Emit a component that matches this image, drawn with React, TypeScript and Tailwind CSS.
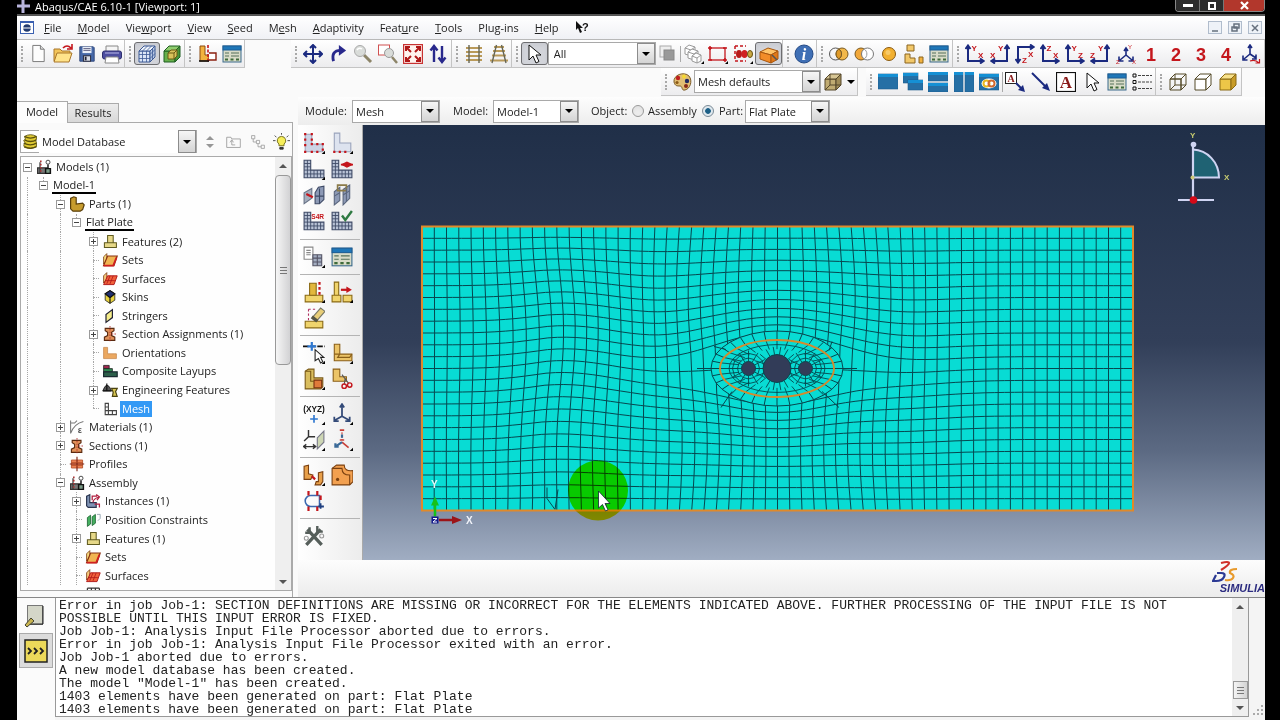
import React from "react";

type P = { children?: React.ReactNode; s?: number };
const Svg = ({ children, s = 20 }: P) => (
  <svg width={s} height={s} viewBox="0 0 20 20" fill="none" stroke="#333" strokeWidth="1" aria-hidden="true">
    {children}
  </svg>
);

const NAVY = "#1b2a80";
const RED = "#c4161c";

/* ---------- shared icon parts ---------- */
const TableIcon = (
  <>
    <rect x="1" y="2" width="18" height="16" fill="#d9dcc8" stroke="#3b6a8c" />
    <rect x="1" y="2" width="18" height="4" fill="#1f77b8" stroke="#1f5f96" />
    <path d="M3 9h4M9 9h8M3 12h4M9 12h8" stroke="#54705a" />
    <path d="M3 15.500h3M8.500 15.500h3M14 15.500h3" stroke="#3f6b3a" strokeWidth="2" />
  </>
);
const Cube = ({ f, t, r, c = "#333", grid }: { f: string; t: string; r: string; c?: string; grid?: boolean }) => (
  <>
    <path d="M2 7h11v11H2z" fill={f} stroke={c} />
    <path d="M2 7l5-5h11l-5 5z" fill={t} stroke={c} />
    <path d="M13 7l5-5v11l-5 5z" fill={r} stroke={c} />
    {grid && <path d="M5.500 7v11M9.500 7v11M2 10.500h11l5-5M2 14.500h11l5-5M5.500 7l5-5M9.500 7l5-5M15.500 4.500v11" stroke={c} strokeWidth=".8" />}
  </>
);
const LMesh = (
  <>
    <path d="M1 2h6v9h12v7H1z" fill="#b9c3d6" stroke="#3e4a66" />
    <path d="M4 2v16M1 5h6M1 8h6M1 11h6M1 14.500h18M7 11v7M10 11v7M13 11v7M16 11v7" stroke="#3e4a66" strokeWidth=".8" />
  </>
);
const Corner = <path d="M20 17v3h-3z" fill="#000" stroke="none" />;
const Mag = (
  <>
    <path d="M11 11l7 7" stroke="#8c8468" strokeWidth="3" />
    <circle cx="7" cy="7" r="5.500" fill="#d9dcd9" stroke="#aaa" />
    <path d="M4 6q2-3 5-1" stroke="#fff" strokeWidth="1.500" />
  </>
);
const Axes = ({ a, b, m }: { a: string; b: string; m?: boolean }) => (
  <>
    {m ? (
      <path d="M17 2v15H2M14.500 5L17 1.500 19.500 5M5 14.500L1.500 17 5 19.500" stroke={NAVY} strokeWidth="2" />
    ) : (
      <path d="M3 2v15h15M.5 5L3 1.500 5.500 5M15 14.500l3.500 2.500-3.500 2.500" stroke={NAVY} strokeWidth="2" />
    )}
    <g fill={RED} stroke="none" fontFamily="Liberation Sans, sans-serif" fontWeight="bold" fontSize="8">
      <text x={m ? 8 : 6.5} y="7">{a}</text>
      <text x={m ? 0 : 13} y="14">{b}</text>
    </g>
  </>
);
const Num = ({ n }: { n: string }) => (
  <text x="10" y="16.500" textAnchor="middle" fill={RED} stroke="none" fontFamily="Liberation Sans, sans-serif" fontWeight="bold" fontSize="18">{n}</text>
);
const Arrow = <path d="M5 1v15l4-4 3 7 3-1.500-3-6.500h5z" fill="#fff" stroke="#111" />;
const Win = ({ x, y, w, h }: { x: number; y: number; w: number; h: number }) => (
  <>
    <rect x={x} y={y} width={w} height={h} fill="#256fa5" stroke="#1c5a8c" strokeWidth=".6" />
    <rect x={x} y={y} width={w} height={Math.min(3, h)} fill="#1590d4" stroke="none" />
  </>
);
const BasePart = <path d="M2 13h16v6H2z" fill="#f0d46c" stroke="#8a6a14" />;
const PartL = (c: string) => <path d="M3 3l5-2v9h11l-1 6-3 2H3z" fill={c} stroke="#7a5010" />;

const icons: Record<string, React.ReactNode> = {
  new: <><path d="M4 1.500h8l4 4v13H4z" fill="#fdfdfd" stroke="#777" /><path d="M12 1.500v4h4" stroke="#777" fill="#ddd" /></>,
  open: <><path d="M1 17V5h6l2 2h8v3" fill="#f3c55a" stroke="#a9762a" /><path d="M1 18l3-9h15l-3 9z" fill="#ffe38a" stroke="#a9762a" /><path d="M10 4q4-4 8 0M19 0v5h-5" stroke={RED} strokeWidth="1.600" /></>,
  save: <><path d="M2 2h15l1 1v15H2z" fill="#4668a8" stroke="#2b4378" /><rect x="5" y="2" width="10" height="7" fill="#e8eef8" stroke="none" /><path d="M6 4h8M6 6h8" stroke="#557" /><rect x="6" y="12" width="8" height="6" fill="#d7dce6" stroke="#223" /><rect x="7.500" y="13" width="2" height="4" fill="#223" stroke="none" /></>,
  print: <><path d="M4 2h12v6H4z" fill="#f5f5f5" stroke="#888" /><rect x="0.500" y="7" width="19" height="8" rx="2" fill="#4c4da0" stroke="#2e2f70" /><path d="M3 9h14" stroke="#b8b8e8" /><path d="M4 13h12l1 6H3z" fill="#fff" stroke="#888" /></>,
  meshcube: <Cube f="#dbe6f7" t="#eef3fb" r="#b8c8e4" c="#3d5a96" grid />,
  greencube: <><Cube f="#67b04b" t="#8fcc6e" r="#4a9338" c="#1f5f22" /><path d="M6 9l3-3h6v6l-3 3H6z" fill="#d9c25b" stroke="#6b5a15" /><path d="M6 9h6v6M12 9l3-3" stroke="#6b5a15" /></>,
  lcut: <><path d="M3 2h5v9h4v6H3z" fill="#f2b23e" stroke="#8a4a10" /><path d="M12 9h7v7h-7" stroke="#8a2010" strokeWidth="1.400" fill="#fff" /><path d="M11 1v18" stroke={RED} strokeDasharray="3 1.500" strokeWidth="1.600" /><path d="M2 17h10" stroke="#111" strokeWidth="1.600" /></>,
  table: TableIcon,
  pan: <path d="M10 1v18M1 10h18M7 4l3-3 3 3M7 16l3 3 3-3M4 7l-3 3 3 3M16 7l3 3-3 3" stroke={NAVY} strokeWidth="2" />,
  rotate: <><path d="M5 18Q2 6 13 6" stroke="#28288c" strokeWidth="3.200" /><path d="M11 0l8 6-8 6z" fill="#28288c" stroke="none" /></>,
  zoom: Mag,
  zoombox: <><rect x="0.500" y="1" width="11" height="10" stroke="#d05050" fill="#fff" /><circle cx="11" cy="9" r="4.500" fill="#d9dcd9" stroke="#999" /><path d="M14 13l5 6" stroke="#8c8468" strokeWidth="2.500" /></>,
  fit: <><rect x="0.500" y="0.500" width="19" height="19" stroke="#c83232" fill="#fff3ee" strokeWidth="1.400" /><path d="M8 8L3.500 3.500M12 8l4.500-4.500M8 12l-4.500 4.500M12 12l4.500 4.500" stroke="#b01818" strokeWidth="2" /><path d="M3 7V3h4M13 3h4v4M3 13v4h4M17 13v4h-4" stroke="#b01818" strokeWidth="2" /></>,
  updown: <path d="M6 18V3M2.500 6.500L6 2l3.500 4.500M14 2v15M10.500 13.500L14 18l3.500-4.500" stroke="#28288c" strokeWidth="2.400" />,
  rails: <><path d="M2 4h16M2 8h16M2 12h16M2 16h16" stroke="#b99a5a" strokeWidth="2.200" /><path d="M5 1v18M15 1v18" stroke="#665" strokeWidth="1.400" /></>,
  rails2: <><path d="M5 3h10M4 7h12M3 11.500h14M1 16.500h18" stroke="#b99a5a" strokeWidth="2.200" /><path d="M7.500 1L3 19M12.500 1L17 19" stroke="#665" strokeWidth="1.400" /></>,
  select: Arrow,
  copy: <><rect x="2" y="2" width="11" height="11" stroke="#aaa" fill="#eee" /><rect x="6" y="6" width="10" height="10" fill="#999" stroke="#888" /></>,
  boxes: <><path d="M1 4l4-3 6 2v6l-4 3-6-2zM1 4l6 2v6M7 6l4-3" fill="#fff" stroke="#999" /><path d="M4 8l4-3 6 2v6l-4 3-6-2zM4 8l6 2v6M10 10l4-3" fill="#fff" stroke="#999" /><path d="M8 12l4-3 5 2v6l-4 2-5-2zM8 12l5 2v5M13 14l4-3" fill="#fff" stroke="#999" />{Corner}</>,
  selrect: <><rect x="2" y="4" width="15" height="12" stroke={RED} strokeWidth="1.300" /><path d="M0 4h4M2 2v4M15 16h4M17 14v4M0 16h4M15 4h4" stroke={RED} strokeWidth="1.500" />{Corner}</>,
  selcirc: <><path d="M2 2h11M2 2v15h11" stroke={RED} strokeDasharray="3 2" strokeWidth="1.500" /><ellipse cx="6" cy="10" rx="3" ry="4" fill="#b81a1a" stroke="none" /><ellipse cx="11.500" cy="10" rx="3" ry="4" fill="#d02020" stroke="none" /><ellipse cx="17" cy="10" rx="2.500" ry="3.500" fill="#c9a842" stroke="#665010" />{Corner}</>,
  orangebox: <><path d="M1 8l8-4 10 3-7 4z" fill="#ffc46a" stroke="#a8560e" /><path d="M1 8l11 3v8L1 15z" fill="#f28c28" stroke="#a8560e" /><path d="M12 11l7-4v8l-7 4z" fill="#e07818" stroke="#a8560e" /><path d="M13 11l5 5" stroke="#555" strokeWidth="1.600" /></>,
  info: <><circle cx="10" cy="10" r="9" fill="#3f6fb5" stroke="#244a86" /><text x="10" y="15.500" textAnchor="middle" fontFamily="Liberation Serif, serif" fontStyle="italic" fontWeight="bold" fontSize="16" fill="#fff" stroke="none">i</text></>,
  venn1: <><circle cx="13" cy="10" r="6" fill="#f2b84a" stroke="#7a5a20" /><circle cx="6.500" cy="10" r="6" stroke="#555" /><path d="M9.800 5a6 6 0 010 10a6 6 0 010-10" fill="#e09a28" stroke="#7a5a20" /></>,
  venn2: <><circle cx="7" cy="10" r="6" fill="#f2a83a" stroke="#7a5a20" /><circle cx="13.500" cy="10" r="6" fill="#fff" stroke="#777" /><path d="M10.200 5a6 6 0 010 10" stroke="#999" /></>,
  disc: <><circle cx="10" cy="10" r="6.500" fill="#f2b030" stroke="#8a5a10" /><circle cx="9" cy="8.500" r="2.500" fill="#f8ca68" stroke="none" /></>,
  blocks: <><path d="M3 1h7v6H3zM1 10h5v4h5v5H1z" fill="#f2c86a" stroke="#8a6420" /><path d="M15 13h4v6h-4z" fill="#f2b23e" stroke="#8a6420" /></>,
  xy: <Axes a="Y" b="X" />, xym: <Axes a="Y" b="X" m />, zx: <Axes a="Z" b="X" />, yz: <Axes a="Y" b="Z" />, zym: <Axes a="Y" b="Z" m />,
  xz: <><path d="M3 18V3h15M.5 15L3 18.500 5.500 15M15 .5L18.500 3 15 5.500" stroke={NAVY} strokeWidth="2" /><g fill={RED} stroke="none" fontFamily="Liberation Sans, sans-serif" fontWeight="bold" fontSize="8"><text x="13" y="13">X</text><text x="7" y="19">Z</text></g></>,
  iso: <><path d="M10 11V5M10 11l-6 5M10 11l6 5M8 7l2-3 2 3M3 12.500V17h4.500M17 12.500V17h-4.500" stroke={NAVY} strokeWidth="1.600" /><g fill={RED} stroke="none" fontFamily="Liberation Sans, sans-serif" fontSize="6"><text x="12" y="5">Y</text><text x="0" y="20">Z</text><text x="16" y="20">X</text></g></>,
  n1: <Num n="1" />, n2: <Num n="2" />, n3: <Num n="3" />, n4: <Num n="4" />,
  isorot: <><path d="M9 10V1M9 10l-6 5M9 10l6 4M7 4l2-3 2 3M2 11.500V16h4.500M15 10.500V15h-4" stroke={NAVY} strokeWidth="1.600" /><path d="M9 17q5-2 9 2M18.500 15v4h-4" stroke={RED} strokeWidth="1.200" /></>,
  palette: <><path d="M2 10C1 3 12-1 17 4c4 5 1 13-4 14-4 1-2-4-5-4s-5 0-6-4z" fill="#e2bf74" stroke="#7a5a28" /><circle cx="6" cy="6" r="2.200" fill="#c02020" stroke="none" /><circle cx="12" cy="4.500" r="2" fill="#f5d832" stroke="none" /><circle cx="15" cy="9" r="2.200" fill="#222a60" stroke="none" /><circle cx="14" cy="14" r="2" fill="#8a2a18" stroke="none" /><circle cx="5" cy="10.500" r="1.600" fill="#8a5a18" stroke="none" /></>,
  tancube: <><Cube f="#c0ab72" t="#d6c594" r="#a08c58" c="#54472a" /><path d="M7 2v11h11M7 13l-5 5" stroke="#54472a" /></>,
  win1: <Win x={0} y={2} w={20} h={15} />,
  win2: <><Win x={0} y={1} w={15} h={10} /><Win x={5} y={8} w={15} h={10} /></>,
  win3: <><Win x={0} y={0} w={20} h={9} /><Win x={0} y={11} w={20} h={9} /></>,
  win4: <><Win x={0} y={0} w={9} h={20} /><Win x={11} y={0} w={9} h={20} /></>,
  win5: <><Win x={0} y={2} w={20} h={16} /><ellipse cx="10" cy="11.500" rx="7.500" ry="5" fill="#fff" stroke="none" /><circle cx="7.500" cy="11.500" r="3" stroke="#e8b820" strokeWidth="2" /><circle cx="12.500" cy="11.500" r="3" stroke="#d06a30" strokeWidth="2" /></>,
  aarrow: <><rect x="0.500" y="0.500" width="11" height="11" fill="#fff" stroke="#222" /><text x="6" y="10" textAnchor="middle" fontFamily="Liberation Serif, serif" fontWeight="bold" fontSize="10" fill="#8a1a1a" stroke="none">A</text><path d="M11 11l6 6" stroke={NAVY} strokeWidth="2" /><path d="M20 20l-7-2 5-5z" fill={NAVY} stroke="none" /></>,
  line: <><path d="M1 1l14 14" stroke={NAVY} strokeWidth="2" /><path d="M19 19l-8-3 5-5z" fill={NAVY} stroke="none" /></>,
  abox: <><rect x="0.500" y="0.500" width="19" height="19" fill="#fff" stroke="#111" strokeWidth="1.200" /><text x="10" y="16" textAnchor="middle" fontFamily="Liberation Serif, serif" fontWeight="bold" fontSize="17" fill="#8a1a1a" stroke="none">A</text></>,
  legend: <><path d="M1 2h3v3H1zM1 8.500h3v3H1zM1 15h3v3H1z" stroke="#111" /><path d="M6 3.500h14M6 10h14M6 16.500h14" stroke="#444" strokeDasharray="3 1" /></>,
  wire: <><Cube f="none" t="none" r="none" c="#554a28" /><path d="M7 2v11h11M7 13l-5 5" stroke="#554a28" /></>,
  hidden: <Cube f="#fff" t="#fff" r="#fff" c="#554a28" />,
  shaded: <Cube f="#ecc648" t="#f8e18a" r="#c89c28" c="#8a6a14" />,
  /* toolbox */
  seedpart: <><path d="M2 2h6v9h10v7H2z" fill="#ccd4e6" stroke="#9aa4bc" /><path d="M1 1h2v2H1zM7 1h2v2H7zM1 6h2v2H1zM7 6h2v2H7zM7 10h2v2H7zM12 10h2v2h-2zM17 10h2v2h-2zM1 11h2v2H1zM1 17h2v2H1zM7 17h2v2H7zM12 17h2v2h-2zM17 15h2v2h-2z" fill={RED} stroke="none" />{Corner}</>,
  seededge: <><path d="M3 1h5v9h10v8H3z" fill="#dde3ef" stroke="#9aa4bc" /><path d="M2 18h15" stroke={RED} strokeWidth="2" strokeDasharray="2 3" />{Corner}</>,
  lmesh: <>{LMesh}{Corner}</>,
  lmeshdel: <>{LMesh}<path d="M9 6h11M13 6h2" stroke={RED} strokeWidth="1.500" /><path d="M10 6l4-2v4zM19 6l-4-2v4z" stroke={RED} fill={RED} /></>,
  meshctl: <><path d="M11 8l3-5 5-1v12l-4 4h-4z" fill="#8d9ab6" stroke="#3e4a66" /><path d="M11 11h8M15 4v14" stroke="#3e4a66" /><path d="M1 18V8l7-4v9z" fill="#a5afbe" stroke="#6a7488" /><path d="M3 9l6 3" stroke={RED} strokeWidth="2" /></>,
  swap: <><path d="M3 7l5-4v12l-5 4zM11 5l6-4v12l-6 6z" fill="#8d9ab6" stroke="#5a667e" /><path d="M6 1h8v5H6z" stroke="#8a7a48" strokeWidth="1.500" /><path d="M3 11l5-3M11 10l6-4M14 4v12" stroke="#5a667e" /></>,
  s4r: <>{LMesh}<text x="7.500" y="8" fontFamily="Liberation Sans, sans-serif" fontWeight="bold" fontSize="6" fill={RED} stroke="none">S4R</text></>,
  verify: <>{LMesh}<path d="M10 5l3 4 6-8" stroke="#2f7a42" strokeWidth="2.200" /></>,
  docs: <><path d="M1 1h8v11H1zM3 4h4M3 6h4M3 8h4" fill="#fff" stroke="#888" /><path d="M9 8h8v10H9z" fill="#a3adc0" stroke="#556" /><path d="M9 11h8M9 14.500h8M13 8v10" stroke="#556" />{Corner}</>,
  extr: <>{BasePart}<path d="M6 2h6v11H6z" fill="#e2b73c" stroke="#8a6a14" /><path d="M15 1v13" stroke={RED} strokeWidth="2" strokeDasharray="2.500 2" />{Corner}</>,
  split: <><path d="M3 1h4v12H3zM1 13h8v6H1zM11 13h8v6h-8z" fill="#f0d46c" stroke="#8a6a14" /><path d="M9 8h6" stroke={RED} strokeWidth="2" /><path d="M14 5l5 3-5 3z" fill={RED} stroke="none" />{Corner}</>,
  eraseft: <>{BasePart}<path d="M5 2v11M5 2h6" stroke="#b03060" strokeDasharray="2 2" /><path d="M9 9l7-8 4 3-7 8z" fill="#e8ce78" stroke="#776" /><path d="M8 9l5 4" stroke="#554" strokeWidth="3" /></>,
  partpt: <><path d="M0 4h20" stroke="#111" strokeDasharray="5 1.500" strokeWidth="1.500" /><path d="M8 0v8M4 4h8" stroke="#2f78d0" strokeWidth="2" /><path d="M11 7v10l3-2 2 4 2-1-2-4h3z" fill="#fff" stroke="#222" />{Corner}</>,
  partl: <><path d="M3 2h5v9h11v6H3z" fill="#ecc468" stroke="#8a5f18" /><path d="M3 11h5M8 11l-2 3h11l2-3" stroke="#8a5f18" />{Corner}</>,
  partcell: <><path d="M2 3l3-2h5v8h8v8l-2 2H2z" fill="#d9bd5e" stroke="#7a5a18" /><path d="M10 11h7v7h-7z" fill="#e07a3a" stroke="#7a3010" /><path d="M2 3h5v9h3" stroke="#7a5a18" />{Corner}</>,
  partcut: <><path d="M2 1h6v7h6v4H2z" fill="#ecc468" stroke="#8a5f18" /><path d="M10 6l6 8M13 9l-1 6" stroke="#555" /><circle cx="12" cy="16.500" r="2" stroke={RED} strokeWidth="1.300" /><circle cx="17" cy="15.500" r="2" stroke={RED} strokeWidth="1.300" /></>,
  xyz: <><text x="10" y="8" textAnchor="middle" fontFamily="Liberation Sans, sans-serif" fontWeight="bold" fontSize="7.500" fill="#111" stroke="none">(XYZ)</text><path d="M10 11v7M6.500 14.500h7" stroke="#2f78d0" strokeWidth="1.500" />{Corner}</>,
  triad: <><path d="M10 12V1M10 12l-7 4M10 12l7 4M8 4l2-3 2 3M3 12.500V16.500h4M17 12.500v4h-4" stroke="#334a78" strokeWidth="1.600" />{Corner}</>,
  plane: <><path d="M13 8l6-6v10l-6 6z" fill="#cdd6b4" stroke="#778" /><path d="M5 1v6h6M5 7l-4 4M1 16h10M3 14l-2.500 2L3 18M9 14l2.500 2L9 18" stroke="#333" strokeWidth="1.300" />{Corner}</>,
  csys: <><path d="M8 1h4M8 10h4M10 12l6 5" stroke="#c84038" strokeWidth="1.500" /><path d="M10 3v7" stroke="#c84038" strokeDasharray="2 1" /><path d="M10 5v3M10 12l-6 4M4 13v3h3" stroke="#3a6a98" strokeWidth="2" />{Corner}</>,
  map: <><path d="M1 2l4-1v8l4 1-2 4H1zM14 8l4-1v9l-2 3h-5l1-3h2z" fill="#e8a04a" stroke="#7a4010" /><path d="M8 11l3 3" stroke={RED} strokeWidth="2" />{Corner}</>,
  orangepart: <><path d="M1 4l4-3h7q0 6 8 5v10l-3 3H1z" fill="#f2a050" stroke="#7a4010" /><path d="M1 4h9q0 6 7 6v9" stroke="#7a4010" /><circle cx="6" cy="14" r="1.500" fill="#7a4010" stroke="none" /></>,
  loop: <><path d="M15 5H7a5 5 0 000 10h8z" stroke="#3a68b0" strokeWidth="1.400" /><path d="M5 1v4M13 1v4M5 15v4M13 15v4M16 5v4" stroke={RED} strokeWidth="2" /><path d="M16 12v5M14 15h5" stroke="#204080" strokeWidth="1.600" /></>,
  tools: <><path d="M3 18L16 4M4 4l13 14" stroke="#555e5a" strokeWidth="3" /><path d="M13 1v5h5M2 7h4V2" stroke="#555e5a" strokeWidth="2.200" /><circle cx="3" cy="12" r="1.800" stroke="#999" /><circle cx="17" cy="10" r="1.800" stroke="#999" /></>,
  /* tree */
  t_models: <><path d="M5 18V4M2 18V11h12v7z" fill="#777" stroke="#333" strokeWidth="1.500" /><path d="M6 2v15" stroke="#a33" strokeWidth="2" strokeDasharray="2 2" /><circle cx="15" cy="4" r="2.500" stroke="#222" fill="#fff" /><path d="M15 7v5M12 18v-6h6v6z" stroke="#111" strokeWidth="1.800" fill="#7a9a86" /></>,
  t_part: <path d="M2 3l4-2 3 1v8l8-1 2 2-2 6-3 2H5l-3-3z" fill="#c79c2e" stroke="#5a3f0a" strokeWidth="1.500" />,
  t_feat: <path d="M7 2h7v9H7zM3 11h15v6H3z" fill="#e6d888" stroke="#5f5a20" strokeWidth="1.300" />,
  t_set: <><path d="M2 15V6l4-4v8z" fill="#f6d87a" stroke="#7a3a10" /><path d="M2 17l5-12h12l-4 12z" fill="#f0b452" stroke="#8a3010" strokeWidth="1.500" /><path d="M2 17h12l4-10" stroke="#d02020" strokeWidth="2.200" /></>,
  t_surf: <><path d="M2 15V6l4-4v8z" fill="#f6c87a" stroke="#7a3a10" /><path d="M2 17l5-11h12l-4 11z" fill="#f0603a" stroke="#b01818" strokeWidth="1.200" /><path d="M6 16l4-10M10 16l4-10M4 12h12" stroke="#b01818" /></>,
  t_skin: <><path d="M4 6l6-4 6 4v8l-6 4-6-4z" fill="#e8d23e" stroke="#222" /><path d="M4 6l6-4 6 4-6 5zM10 10v8" fill="#223070" stroke="#111" strokeWidth="1.500" /></>,
  t_str: <path d="M5 8l8-6v10l-8 6z" fill="#f4ec8a" stroke="#223" strokeWidth="1.500" />,
  t_sec: <><path d="M4 3h11v3l-3 2v4l4 2v4H3v-4l4-2V8L4 6z" fill="#e0925a" stroke="#5a2a10" strokeWidth="1.400" /><path d="M10 0v19M12 10h6" stroke="#b02020" strokeDasharray="2 1.500" /></>,
  t_ori: <path d="M2 3h5v8h11v6H2z" fill="#eba860" stroke="#c88a50" />,
  t_comp: <><path d="M2 3h7v4H2z" fill="#a02a50" stroke="#222" /><path d="M2 7h11v4H2z" fill="#2e8a50" stroke="#222" /><path d="M2 11h17v6H2z" fill="#2c5f4a" stroke="#1a2a30" strokeWidth="1.500" /></>,
  t_eng: <><path d="M1 11q5-14 11 0z" fill="#555" stroke="#111" /><path d="M6 2v9M1 11h11" stroke="#111" strokeWidth="1.500" /><path d="M12 8h7l-2 4 2 6h-6l1-5z" fill="#d6c450" stroke="#4a4210" strokeWidth="1.500" /></>,
  t_mesh: <path d="M4 3h4v14H4zM4 7.500h4M4 12h14v5H4M8 12v5M13 12v5" stroke="#444" strokeWidth="1.400" />,
  t_mat: <><path d="M2 2v16M2 18Q6 6 18 3M2 5h5l3-3" stroke="#777" strokeWidth="1.300" /><text x="11" y="18" fontFamily="Liberation Sans, sans-serif" fontWeight="bold" fontSize="11" fill="#555" stroke="none">ε</text></>,
  t_prof: <><path d="M3 5h14v10H3z" fill="#f0875a" stroke="#b04a20" /><path d="M10 1v18M1 10h18" stroke="#7a2010" strokeWidth="1.400" /><path d="M3 8h14M3 12h14" stroke="#b04a20" /></>,
  t_inst: <><path d="M2 4l4-2v10h8v6H4l-2-2z" fill="#7f93b4" stroke="#2a3650" strokeWidth="1.500" /><path d="M9 9V4h6M10 12q0-5 8-7M14 2l4 3-3 4M12 14h6v4" stroke="#b02040" strokeWidth="1.600" /></>,
  t_pos: <><path d="M3 7l4-3v11l-4 3zM9 6l4-3v11l-4 3z" fill="#45b060" stroke="#16602c" /><path d="M15 3h4v5l-3 3" stroke="#8899a8" /></>,
  t_job: <path d="M3 4h15M3 4v14M8 4v14M13 4v10M3 9h15M18 4v5" stroke="#333" strokeWidth="1.500" />,
  db: <><path d="M3 4q7-4 14 0v3l-1 2 1 2v5q-7 4-14 1l-1-3 2-2-2-3 2-2z" fill="#e0cb34" stroke="#5a500c" /><path d="M3 4q7 4 14 0M3 8q7 4 14 0M2 12q8 4 15 0M3 16q7 4 14 0" stroke="#5a500c" strokeWidth="1.600" /></>,
  folder: <><path d="M2 5h5l1 2h10v10H2z" stroke="#999" /><path d="M8 14h4M8 14v-5M6 11l2-3 2 3" stroke="#999" /></>,
  nodes: <path d="M2 2h4v4H2zM8 8h4v4H8zM14 14h4v4h-4zM4 6v4h4M10 12v4h4" stroke="#999" />,
  bulb: <><path d="M10 4a5 5 0 00-3 9v2h6v-2a5 5 0 00-3-9z" fill="#f6ee5a" stroke="#666010" /><path d="M8 17h4v2H8z" fill="#444" stroke="#222" /><path d="M10 0v2M2 3l2 2M18 3l-2 2M0 9h3M17 9h3" stroke="#333" /></>,
};

const Btn = ({ n, on, s, cls = "h-[23px]" }: { n: string; on?: boolean; s?: number; cls?: string }) => (
  <button type="button" aria-label={n} className={`flex min-w-0 flex-1 items-center justify-center ${on ? "rounded-[3px] border border-[#6d6d70] bg-[#d2d4da] shadow-inner" : ""} ${cls}`}>
    <Svg s={s}>{icons[n]}</Svg>
  </button>
);
const Grip = () => <span className="mr-px ml-1 h-4 w-1 shrink-0 border-l-2 border-dotted border-[#a8a8a8]" />;
const Group = ({ w, children }: { w: string; children: React.ReactNode }) => (
  <div className={`flex h-7 shrink-0 items-center border-r border-b border-[#c4c4c4] bg-gradient-to-b from-white to-[#ececee] ${w}`}>
    <Grip />
    {children}
  </div>
);
const Drop = ({ id, v, w, label, cls = "" }: { id: string; v: string; w: string; label?: string; cls?: string }) => (
  <span className={`relative flex h-[23px] shrink-0 border border-[#a9a9a9] bg-white ${w} ${cls}`}>
    <select id={id} aria-label={label} className="w-full appearance-none bg-transparent pl-[3px] text-[11px] leading-none outline-none" defaultValue={v}>
      <option>{v}</option>
    </select>
    <span className="pointer-events-none absolute top-0 right-0 flex h-full w-[18px] items-center justify-center border border-[#8c8c8c] bg-gradient-to-b from-[#f6f6f6] to-[#d4d4d4]">
      <span className="border-x-[4px] border-t-[4px] border-x-transparent border-t-black" />
    </span>
  </span>
);

/* ---------- model tree ---------- */
type Row = { l: number; t: string; i?: string; e?: "+" | "-"; g: number[]; u?: boolean; sel?: boolean };
const rows: Row[] = [
  { l: 0, t: "Models (1)", i: "t_models", e: "-", g: [] },
  { l: 1, t: "Model-1", e: "-", g: [0], u: true },
  { l: 2, t: "Parts (1)", i: "t_part", e: "-", g: [0] },
  { l: 3, t: "Flat Plate", e: "-", g: [0, 2], u: true },
  { l: 4, t: "Features (2)", i: "t_feat", e: "+", g: [0, 2] },
  { l: 4, t: "Sets", i: "t_set", g: [0, 2] },
  { l: 4, t: "Surfaces", i: "t_surf", g: [0, 2] },
  { l: 4, t: "Skins", i: "t_skin", g: [0, 2] },
  { l: 4, t: "Stringers", i: "t_str", g: [0, 2] },
  { l: 4, t: "Section Assignments (1)", i: "t_sec", e: "+", g: [0, 2] },
  { l: 4, t: "Orientations", i: "t_ori", g: [0, 2] },
  { l: 4, t: "Composite Layups", i: "t_comp", g: [0, 2] },
  { l: 4, t: "Engineering Features", i: "t_eng", e: "+", g: [0, 2] },
  { l: 4, t: "Mesh", i: "t_mesh", g: [0, 2], sel: true },
  { l: 2, t: "Materials (1)", i: "t_mat", e: "+", g: [0] },
  { l: 2, t: "Sections (1)", i: "t_sec", e: "+", g: [0] },
  { l: 2, t: "Profiles", i: "t_prof", g: [0] },
  { l: 2, t: "Assembly", i: "t_models", e: "-", g: [0] },
  { l: 3, t: "Instances (1)", i: "t_inst", e: "+", g: [0, 2] },
  { l: 3, t: "Position Constraints", i: "t_pos", g: [0, 2] },
  { l: 3, t: "Features (1)", i: "t_feat", e: "+", g: [0, 2] },
  { l: 3, t: "Sets", i: "t_set", g: [0, 2] },
  { l: 3, t: "Surfaces", i: "t_surf", g: [0, 2] },
];
const TreeRow = ({ r }: { r: Row }) => (
  <li className="flex min-h-0 flex-1 items-center">
    {Array.from({ length: r.l }, (_, k) => (
      <span key={k} className={`h-full shrink-0 pl-[6px] ${k % 2 ? "w-[17px]" : "w-4"}`}>
        {r.g.includes(k) && <span className="block h-full border-l border-dotted border-[#a8a8a8]" />}
      </span>
    ))}
    <span className="flex h-full w-3 shrink-0 flex-col items-center pl-px">
      <span className={`flex-1 border-l border-dotted ${r.l ? "border-[#a8a8a8]" : "border-transparent"}`} />
      {r.e ? (
        <button type="button" aria-label={`Toggle ${r.t}`} className="flex size-[9px] items-center justify-center border border-[#9a9a9a] bg-white">
          <svg width="5" height="5" viewBox="0 0 5 5" stroke="#444"><path d={r.e === "+" ? "M0 2.500h5M2.500 0v5" : "M0 2.500h5"} /></svg>
        </button>
      ) : (
        <span className="w-full pl-[5px]"><span className="block border-t border-dotted border-[#a8a8a8]" /></span>
      )}
      <span className={`flex-1 border-l border-dotted ${r.l % 2 || r.l === 0 || r.sel ? (r.l === 3 && r.i ? "border-[#a8a8a8]" : "border-transparent") : "border-[#a8a8a8]"}`} />
    </span>
    {r.i ? <span className="flex w-[21px] shrink-0 justify-center pl-px"><Svg s={16}>{icons[r.i]}</Svg></span> : <span className="w-px" />}
    <span className={`px-[2px] leading-4 whitespace-nowrap ${r.u ? "mx-[2px] border-b-2 border-black px-px leading-[14px]" : ""} ${r.sel ? "bg-[#3399f5] text-white" : ""}`}>{r.t}</span>
  </li>
);

/* ---------- mesh geometry ---------- */
const L = 422, R = 1133, T = 226, B = 510, CX = 777, CY = 368;
const g = (d: number, w: number) => Math.exp(-(d * d) / (w * w));
function warp(u: number, v: number): [number, number] {
  const x0 = L + u * (R - L), y0 = T + v * (B - T);
  const edge = Math.sin(Math.PI * v);
  const side = Math.min(1, Math.min(u, 1 - u) * 6);
  const s = v < 0.5 ? -1 : v > 0.5 ? 1 : 0;
  const a = v < 0.5 ? v * 2 : (1 - v) * 2;
  let y = y0 + s * 29 * a * a * g(x0 - CX, 78);
  y += edge * side * (-8 * g(x0 - 560, 60) + 7 * g(x0 - 665, 55) * (1 - v) + 4 * g(x0 - 905, 60));
  let x = x0 + edge * side * (7 * Math.sin(v * 5) * g(x0 - 530, 110) - 8 * g(x0 - 700, 60) * Math.cos(v * 3) + 8 * g(x0 - 855, 60) * Math.cos(v * 3));
  x += side * 10 * g(x0 - 520, 60) * v * v * edge;
  return [x, y];
}
const pt = (p: [number, number]) => `${p[0].toFixed(1)} ${p[1].toFixed(1)}`;
function gridPath() {
  let d = "";
  for (let j = 1; j < 24; j++) d += "M" + Array.from({ length: 73 }, (_, i) => pt(warp(i / 72, j / 24))).join("L");
  for (let i = 1; i < 58; i++) d += "M" + Array.from({ length: 25 }, (_, j) => pt(warp(i / 58, j / 24))).join("L");
  return d;
}
const ell = (k: number, t: number, e = 0): [number, number] => [CX + (57 * k + e) * Math.cos(t), CY + (28.5 * k + e) * Math.sin(t)];
const loop = (k: number, n: number, e = 0) => "M" + Array.from({ length: n }, (_, i) => pt(ell(k, (i / n) * 2 * Math.PI, e))).join("L") + "Z";
function spokes() {
  let d = "";
  for (let i = 0; i < 32; i++) {
    const t = (i / 32) * 2 * Math.PI;
    d += "M" + pt(ell(1, t)) + "L" + pt(ell(1, t, 9));
  }
  return d + "M726 349L714 346M829 350L832 341M732 391L721 407M822 391L839 407M843 368h14M711 368h-14";
}
function innerPath() {
  let d = loop(0.84, 32);
  for (let i = 0; i < 32; i++) {
    const t = (i / 32) * 2 * Math.PI;
    d += "M" + pt(ell(1, t)) + "L" + pt(ell(0.68, t));
  }
  for (let i = 0; i < 18; i++) {
    const t = (i / 18) * 2 * Math.PI;
    d += `M${CX + 14 * Math.cos(t)} ${CY + 14 * Math.sin(t)}L${CX + 22 * Math.cos(t)} ${CY + 22 * Math.sin(t)}`;
  }
  for (const c of [748.5, 805.5]) {
    for (const r of [11, 16]) d += "M" + Array.from({ length: 12 }, (_, i) => pt([c + r * Math.cos((i / 12) * 6.2832), CY + r * 0.95 * Math.sin((i / 12) * 6.2832)])).join("L") + "Z";
    for (let i = 0; i < 12; i++) {
      const t = (i / 12) * 6.2832;
      d += `M${c + 7 * Math.cos(t)} ${CY + 7 * Math.sin(t)}L${c + 19 * Math.cos(t)} ${CY + 18 * Math.sin(t)}`;
    }
  }
  return d;
}

const Viewport = () => (
  <svg viewBox="363 125 902 434" className="block h-full w-full" preserveAspectRatio="xMidYMid meet" role="img" aria-label="Meshed flat plate" fill="none">
    <clipPath id="ov"><ellipse cx={CX} cy={CY} rx="57" ry="28.500" /></clipPath>
    <rect x={L} y={T} width={R - L} height={B - T} fill="#08dcd4" />
    <g stroke="#06474f" strokeWidth="1">
      <path d={gridPath()} />
      <path d={loop(1, 32, 9)} fill="#08dcd4" />
      <path d={spokes()} />
      <path d="M547 487v11l8 11 3-20" />
      <g clipPath="url(#ov)" strokeWidth=".9"><path d={innerPath()} /></g>
      <g fill="#323c58"><circle cx={CX} cy={CY} r="14" /><circle cx="748.500" cy={CY} r="7" /><circle cx="805.500" cy={CY} r="7" /></g>
    </g>
    <ellipse cx={CX} cy={CY} rx="57" ry="28.500" stroke="#d68a2c" strokeWidth="1.800" />
    <rect x={L} y={T} width={R - L} height={B - T} stroke="#e0892a" strokeWidth="2" />
    <g fontFamily="Liberation Sans, sans-serif" fontWeight="bold" fontSize="10">
      <path d="M435 516v-12" stroke="#16c21a" strokeWidth="2.500" /><path d="M431 505l4-9 4 9z" fill="#16c21a" />
      <path d="M439 519.500h14" stroke="#9c1418" strokeWidth="2.500" /><path d="M452 515.500l10 4-10 4z" fill="#9c1418" />
      <rect x="431.500" y="516" width="7" height="7" fill="#141a8c" /><path d="M433 518h4l-4 3.500h4" stroke="#fff" />
      <text x="431" y="487" fill="#e8f4f4">Y</text><text x="466" y="523" fill="#f2f4fa">X</text>
    </g>
    <path d="M1193 177v-28a27 28 0 0126 28z" fill="#1f6273" stroke="#cfd4f2" strokeWidth="2" />
    <path d="M1193 145v54M1178 199.500h36" stroke="#cfd4f2" strokeWidth="2.200" />
    <circle cx="1193.500" cy="144" r="2.800" fill="#cfd4f2" /><circle cx="1193.500" cy="199.500" r="3.800" fill="#d40a18" /><circle cx="1192.500" cy="177" r="2" fill="#cfc97a" />
    <g fontFamily="Liberation Sans, sans-serif" fontWeight="bold" fontSize="8" fill="#c8cc70"><text x="1190" y="137">Y</text><text x="1224" y="179.500">X</text></g>
    <circle cx="598" cy="490" r="30" fill="#f4ea00" className="mix-blend-multiply" />
    <path d="M598.500 490.500v17l4-3.500 3 6.500 2.500-1.200-3-6.300h5z" fill="#fff" stroke="#123" strokeWidth=".8" />
  </svg>
);

const menus: [string, string, string][] = [["", "F", "ile"], ["", "M", "odel"], ["Vie", "w", "port"], ["", "V", "iew"], ["", "S", "eed"], ["M", "e", "sh"], ["", "A", "daptivity"], ["Feat", "u", "re"], ["", "T", "ools"], ["Plu", "g", "-ins"], ["", "H", "elp"]];
const box: string[][] = [
  ["seedpart", "seededge", "lmesh", "lmeshdel", "meshctl", "swap", "s4r", "verify"],
  ["docs", "table"],
  ["extr", "split", "eraseft"],
  ["partpt", "partl", "partcell", "partcut"],
  ["xyz", "triad", "plane", "csys"],
  ["map", "orangepart", "loop"],
  ["tools"],
];
const log = [
  "Error in job Job-1: SECTION DEFINITIONS ARE MISSING OR INCORRECT FOR THE ELEMENTS INDICATED ABOVE. FURTHER PROCESSING OF THE INPUT FILE IS NOT",
  "POSSIBLE UNTIL THIS INPUT ERROR IS FIXED.",
  "Job Job-1: Analysis Input File Processor aborted due to errors.",
  "Error in job Job-1: Analysis Input File Processor exited with an error.",
  "Job Job-1 aborted due to errors.",
  "A new model database has been created.",
  'The model "Model-1" has been created.',
  "1403 elements have been generated on part: Flat Plate",
  "1403 elements have been generated on part: Flat Plate",
];
const Up = () => <span className="border-x-[4px] border-b-[4px] border-x-transparent border-b-[#555]" />;
const Down = () => <span className="border-x-[4px] border-t-[4px] border-x-transparent border-t-[#555]" />;
const Ridges = () => <span className="h-[7px] w-[7px] border-y border-[#777] bg-[linear-gradient(#777,#777)] bg-[length:100%_1px] bg-center bg-no-repeat" />;

export default function App() {
  return (
    <div className="h-screen min-h-[600px] bg-black pr-[15px] pl-[17px] font-['Open_Sans','Noto_Sans',sans-serif] text-[11px] text-[#222]">
      <div className="flex h-full flex-col overflow-hidden bg-[#fafafa]">
        <header className="flex h-4 shrink-0 items-start justify-between border-b-2 border-[#555] bg-black text-white">
          <div className="flex items-start">
            <svg width="13" height="13" viewBox="0 0 13 13" className="mr-[5px]"><path d="M6 0v13M0 6h13" stroke="#b8b4dc" strokeWidth="3" /></svg>
            <h1 className="text-[11px] leading-[14px]">Abaqus/CAE 6.10-1 [Viewport: 1]</h1>
          </div>
          <div className="flex h-3 overflow-hidden rounded-b border border-t-0 border-[#888]">
            <button type="button" aria-label="Minimize" className="flex w-6 items-center justify-center border-r border-[#777] bg-[#2c2c2c]"><span className="h-[3px] w-[10px] bg-white" /></button>
            <button type="button" aria-label="Restore" className="flex w-6 items-center justify-center border-r border-[#777] bg-[#2c2c2c]"><span className="size-2 border-2 border-white" /></button>
            <button type="button" aria-label="Close" className="flex w-10 items-center justify-center bg-[#b2372c]"><svg width="9" height="9" viewBox="0 0 9 9"><path d="M1 1l7 7M8 1L1 8" stroke="#fff" strokeWidth="2.200" /></svg></button>
          </div>
        </header>

        <nav className="flex h-6 shrink-0 items-center border-b border-[#b8b8b8] bg-gradient-to-b from-white to-[#f0f1f5] pr-[3px] pl-[3px]">
          <svg width="14" height="13" viewBox="0 0 14 13" className="mr-[10px]"><rect x=".5" y=".5" width="13" height="12" fill="#fff" stroke="#3a5fb0" /><path d="M0 1h14" stroke="#3a5fb0" strokeWidth="2" /><circle cx="7" cy="7" r="3.800" fill="#223a6e" /><path d="M2 7h10" stroke="#fff" /></svg>
          <div className="flex items-center gap-4">
            {menus.map(([a, b, c]) => (
              <button type="button" key={a + b + c} className="leading-4"><span>{a}</span><span className="underline">{b}</span><span>{c}</span></button>
            ))}
            <button type="button" aria-label="Context help"><svg width="14" height="13" viewBox="0 0 14 13"><path d="M1 0v9l2-2 2 5 2-1-2-4h3z" fill="#111" /><text x="7" y="10" fontFamily="Liberation Sans, sans-serif" fontWeight="bold" fontSize="11" fill="#111">?</text></svg></button>
          </div>
          <div className="ml-auto flex gap-[6px]">
            {["M3 9h6", "M5 2h5v4H5zM3 5h5v4H3z", "M3 3l6 6M9 3L3 9"].map((d, i) => (
              <button type="button" key={d} aria-label={["Minimize viewport", "Restore viewport", "Close viewport"][i]} className="flex h-[13px] w-[14px] items-center justify-center border border-[#b0bccc] bg-[#eef2f8]"><svg width="12" height="11" viewBox="0 0 12 11"><path d={d} fill="none" stroke="#66707e" strokeWidth="1.500" /></svg></button>
            ))}
          </div>
        </nav>

        <div className="flex h-[28px] shrink-0">
          <Group w="w-[108px]"><Btn n="new" s={19} /><Btn n="open" /><Btn n="save" s={18} /><Btn n="print" /></Group>
          <Group w="w-[60px]"><Btn n="meshcube" on /><Btn n="greencube" /></Group>
          <Group w="w-[60px]"><Btn n="lcut" /><Btn n="table" /></Group>
          <span className="w-[46px] shrink-0" />
          <Group w="w-[161px]"><Btn n="pan" /><Btn n="rotate" s={18} /><Btn n="zoom" /><Btn n="zoombox" /><Btn n="fit" /><Btn n="updown" /></Group>
          <Group w="w-[60px]"><Btn n="rails" /><Btn n="rails2" /></Group>
          <Group w="w-[271px]">
            <Btn n="select" on />
            <Drop id="filter" label="Selection filter" v="All" w="w-[108px]" cls="pl-[2px]" />
            <Btn n="copy" /><span className="h-4 border-l border-[#aaa]" /><Btn n="boxes" /><Btn n="selrect" /><Btn n="selcirc" /><Btn n="orangebox" on />
          </Group>
          <Group w="w-[34px]"><Btn n="info" /></Group>
          <Group w="w-[136px]"><Btn n="venn1" /><Btn n="venn2" /><Btn n="disc" /><Btn n="blocks" /><Btn n="table" /></Group>
          <Group w="flex-1">
            {["xy", "xym", "xz", "zx", "yz", "zym", "iso", "n1", "n2", "n3", "n4", "isorot"].map((n) => <Btn key={n} n={n} />)}
          </Group>
        </div>
        <div className="flex h-[29px] shrink-0 justify-end pr-[23px]">
          <Group w="w-[197px]">
            <Btn n="palette" />
            <Drop id="colors" label="Color code" v="Mesh defaults" w="w-[127px]" />
            <Btn n="tancube" />
            <button type="button" aria-label="Render options" className="flex w-3 justify-center"><span className="border-x-[4px] border-t-[4px] border-x-transparent border-t-black" /></button>
          </Group>
          <span className="w-2" />
          <Group w="w-[290px]">
            {["win1", "win2", "win3", "win4", "win5"].map((n) => <Btn key={n} n={n} />)}
            <span className="h-5 border-l border-[#aaa]" />
            {["aarrow", "line", "abox", "select", "table", "legend"].map((n) => <Btn key={n} n={n} />)}
          </Group>
          <Group w="w-[86px]"><Btn n="wire" /><Btn n="hidden" /><Btn n="shaded" /></Group>
        </div>

        <main className="flex min-h-0 flex-1">
          <aside className="flex w-[281px] shrink-0 flex-col pt-1 pr-[5px]">
            <div role="tablist" className="flex h-[22px] items-end">
              <button role="tab" aria-selected="true" type="button" className="h-[22px] w-[51px] border border-b-0 border-l-0 border-[#aaa] bg-[#fdfdfd]">Model</button>
              <button role="tab" aria-selected="false" type="button" className="h-5 w-[51px] border border-l-0 border-[#aaa] bg-gradient-to-b from-[#ececec] to-[#d8d8d8]">Results</button>
              <span className="h-full flex-1 border-b border-[#aaa]" />
            </div>
            <div className="flex min-h-0 flex-1 flex-col border-r border-[#aaa] pt-[7px] pb-[6px] pl-[3px]">
              <div className="mb-[3px] flex items-center gap-[3px]">
                <span className="flex h-[23px] w-[177px] shrink-0 items-center border border-[#a9a9a9] bg-white">
                  <span className="pl-px"><Svg s={17}>{icons.db}</Svg></span>
                  <Drop id="db" label="Tree source" v="Model Database" w="flex-1" cls="border-none bg-transparent" />
                </span>
                <span className="flex w-5 flex-col items-center gap-1 opacity-60"><Up /><Down /></span>
                <Btn n="folder" s={17} /><Btn n="nodes" s={16} /><Btn n="bulb" s={17} />
              </div>
              <div className="flex min-h-0 flex-1 border border-[#aaa] bg-[#fefefe]">
                <ul className="flex min-w-0 flex-1 flex-col overflow-hidden pt-px">
                  {rows.map((r, i) => <TreeRow key={i} r={r} />)}
                  <li className="flex h-[5px] shrink-0 items-start overflow-hidden pl-16"><Svg s={16}>{icons.t_job}</Svg></li>
                </ul>
                <div className="flex w-4 flex-col items-center bg-[#efefef]">
                  <span className="flex h-[18px] items-center"><Up /></span>
                  <span className="flex h-[190px] w-full items-center justify-center rounded-sm border border-[#999] bg-gradient-to-r from-[#f6f6f6] to-[#d2d2d4]"><Ridges /></span>
                  <span className="mt-auto flex h-4 items-center"><Down /></span>
                </div>
              </div>
            </div>
          </aside>

          <section className="flex min-w-0 flex-1 flex-col">
            <div className="flex h-7 shrink-0 items-center bg-gradient-to-b from-[#fdfdfd] to-[#ededed] pl-[7px]">
              <label htmlFor="module" className="w-[47px]">Module:</label>
              <Drop id="module" v="Mesh" w="w-[88px]" />
              <label htmlFor="model" className="ml-[13px] w-10">Model:</label>
              <Drop id="model" v="Model-1" w="w-[86px]" />
              <span className="ml-3 w-[41px]">Object:</span>
              <input type="radio" name="object" id="assembly" className="size-3 appearance-none rounded-full border border-[#999] bg-[#ececec] shadow-inner" />
              <label htmlFor="assembly" className="ml-1 w-[54px]">Assembly</label>
              <input type="radio" name="object" id="part" defaultChecked className="size-3 appearance-none rounded-full border border-[#7a8a96] bg-[radial-gradient(#1c5f86_35%,#dfe8ee_45%)]" />
              <label htmlFor="part" className="ml-[5px]">Part:</label>
              <Drop id="partname" label="Part name" v="Flat Plate" w="w-[85px]" cls="ml-[2px]" />
            </div>
            <div className="flex min-h-0 flex-1">
              <div className="flex w-[65px] shrink-0 flex-col border-r border-[#aaa] bg-gradient-to-r from-white to-[#ececec] px-[2px]">
                {box.map((sec, i) => (
                  <div key={i} className={`grid grid-cols-[28px_28px] ${i ? "py-1" : "py-[5px]"} ${i < 6 ? "border-b border-[#b4b4b4]" : ""}`}>
                    {sec.map((n) => <Btn key={n} n={n} s={22} cls="h-[26px]" />)}
                  </div>
                ))}
              </div>
              <div className="min-w-0 flex-1 bg-[linear-gradient(#202f48_0%,#323f59_50%,#5c6a83_75%,#a0adc2_100%)]"><Viewport /></div>
            </div>
            <footer className="flex h-[37px] shrink-0 flex-col items-end bg-gradient-to-b from-[#fdfdfd] to-[#ececec]">
              <svg width="32" height="23" viewBox="0 0 32 23" className="mr-[21px] shrink-0" fill="none" strokeWidth="2.200">
                <path d="M9 3q8-2 8 0t-8 7" stroke="#d0302a" />
                <path d="M5 13h4q5 0 3 4-2 4-8 4H1l3-6" stroke="#2c3a94" />
                <path d="M25 9q-8 0-7 4 5 2 3 5-2 3-8 2" stroke="#e89a2c" />
              </svg>
              <span className="font-['Liberation_Sans',sans-serif] text-[11px] leading-[11px] font-bold text-[#2c2c80] italic">SIMULIA</span>
            </footer>
          </section>
        </main>

        <section className="flex h-[123px] shrink-0 border-t border-[#888] bg-[#f4f4f4]">
          <div className="flex w-[38px] flex-col bg-[#fbfbfb] pt-[1px]">
            <button type="button" aria-label="Message area" className="flex h-[34px] w-[35px] items-center justify-center">
              <svg width="22" height="24" viewBox="0 0 22 24"><rect x="3.500" y="1.500" width="15" height="19" fill="#d4d6c8" stroke="#777" /><path d="M4 20h15V2" stroke="#222" fill="none" /><path d="M1 21l6-7 3 3-7 6z" fill="#c8b450" stroke="#443" /></svg>
            </button>
            <button type="button" className="mx-0.5 flex h-[35px] items-center justify-center border border-[#aaa] bg-[#dcdcdc]" aria-label="Command line">
              <svg width="24" height="24" viewBox="0 0 24 24"><rect x="1" y="1" width="22" height="22" fill="#ecd95a" stroke="#222" strokeWidth="1.500" /><path d="M4 9l3 3-3 3M10 9l3 3-3 3M16 9l3 3-3 3" fill="none" stroke="#222" strokeWidth="1.800" /></svg>
            </button>
          </div>
          <div className="mb-[3px] flex min-w-0 flex-1 border border-t-0 border-[#999] bg-white">
            <div role="log" className="flex-1 overflow-hidden pt-px pl-[3px] font-['Liberation_Mono',monospace] text-[13px] leading-[13px] whitespace-pre text-[#222]">
              {log.map((t, i) => <p key={i}>{t}</p>)}
            </div>
            <div className="flex w-4 flex-col items-center bg-[#efefef]">
              <span className="flex h-[18px] items-center"><Up /></span>
              <span className="mt-auto flex h-[18px] w-[15px] items-center justify-center border border-[#999] bg-gradient-to-r from-[#f4f4f4] to-[#d4d4d4]"><Ridges /></span>
              <span className="flex h-[17px] items-center"><Down /></span>
            </div>
          </div>
          <div className="flex w-4 items-end justify-end pr-px pb-1">
            <svg width="11" height="11" viewBox="0 0 11 11" fill="#aaa"><path d="M8 0h2v2H8zM4 4h2v2H4zM8 4h2v2H8zM0 8h2v2H0zM4 8h2v2H4zM8 8h2v2H8z" /></svg>
          </div>
        </section>
      </div>
    </div>
  );
}
